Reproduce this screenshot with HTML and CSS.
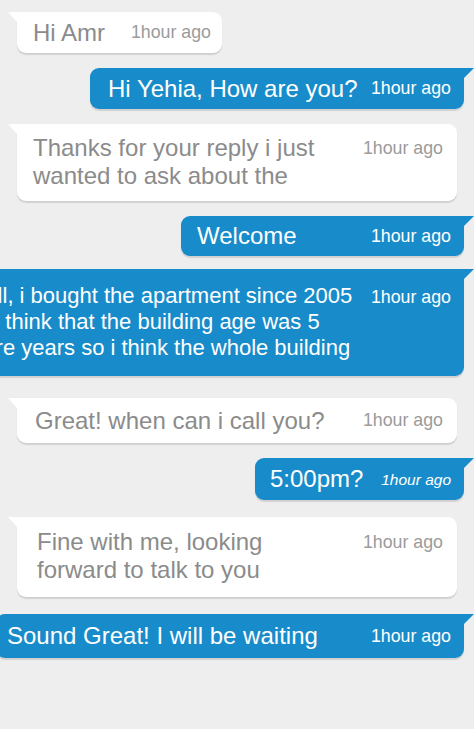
FILE: index.html
```html
<!DOCTYPE html>
<html lang="en">
<head>
<meta charset="utf-8">
<title>Chat</title>
<link rel="stylesheet" href="styles.css">
</head>
<body>
<main class="chat">
  <div class="row in">
    <div class="bubble in b-hi">
      <p class="text">Hi Amr</p>
      <span class="time">1hour ago</span>
    </div>
  </div>
  <div class="row out">
    <div class="bubble out b-yehia">
      <p class="text">Hi Yehia, How are you?</p>
      <span class="time">1hour ago</span>
    </div>
  </div>
  <div class="row in">
    <div class="bubble in full multi p-17">
      <p class="text">Thanks for your reply i just<br>wanted to ask about the</p>
      <span class="time">1hour ago</span>
    </div>
  </div>
  <div class="row out">
    <div class="bubble out b-welcome">
      <p class="text">Welcome</p>
      <span class="time">1hour ago</span>
    </div>
  </div>
  <div class="row out row-long">
    <div class="bubble out b-long">
      <p class="text">Well, i bought the apartment since 2005<br>so i think that the building age was 5<br>more years so i think the whole building</p>
      <span class="time">1hour ago</span>
    </div>
  </div>
  <div class="row in row-great">
    <div class="bubble in full b-great">
      <p class="text">Great! when can i call you?</p>
      <span class="time">1hour ago</span>
    </div>
  </div>
  <div class="row out">
    <div class="bubble out b-five">
      <p class="text">5:00pm?</p>
      <span class="time italic">1hour ago</span>
    </div>
  </div>
  <div class="row in row-fine">
    <div class="bubble in full b-fine">
      <p class="text">Fine with me, looking<br>forward to talk to you</p>
      <span class="time">1hour ago</span>
    </div>
  </div>
  <div class="row out row-sound">
    <div class="bubble out b-sound">
      <p class="text">Sound Great! I will be waiting</p>
      <span class="time">1hour ago</span>
    </div>
  </div>
</main>
</body>
</html>
```

FILE: styles.css
```css
html, body {
  margin: 0;
  padding: 0;
  background: #eeeeee;
  height: 100%;
  overflow: hidden;
}

.chat {
  display: flex;
  flex-direction: column;
  gap: 15px;
  padding-top: 12px;
  font-family: "Liberation Sans", Arial, Helvetica, sans-serif;
}

.row {
  display: flex;
}

.row.in {
  justify-content: flex-start;
  padding-left: 17px;
}

.row.out {
  justify-content: flex-end;
  padding-right: 10px;
}

.bubble {
  position: relative;
  display: flex;
  align-items: flex-start;
  box-sizing: border-box;
  padding: 6.5px 13px 6.5px 18px;
  border-radius: 9px;
  box-shadow: 0 1.5px 1px rgba(0, 0, 0, 0.12);
}

.bubble::before {
  content: "";
  position: absolute;
  top: 0;
  width: 10px;
  height: 10px;
}

.bubble.in {
  background: #ffffff;
  color: #8b8b8b;
  border-top-left-radius: 0;
}

.bubble.in::before {
  left: -9px;
  width: 9px;
  background: #ffffff;
  clip-path: polygon(0 0, 100% 0, 100% 100%);
}

.bubble.out {
  background: #188cca;
  color: #ffffff;
  border-top-right-radius: 0;
}

.bubble.out::before {
  right: -10px;
  background: #188cca;
  clip-path: polygon(0 0, 100% 0, 0 100%);
}

.text {
  flex: 1 1 auto;
  min-width: 0;
  margin: 0;
  font-size: 24px;
  line-height: 28px;
  white-space: nowrap;
}

.time {
  flex: none;
  font-size: 17.8px;
  line-height: 28px;
  margin-top: -0.5px;
}

.bubble.in .time {
  color: #9b9b9b;
}

.time.italic {
  font-style: italic;
  font-size: 15.5px;
}

.full {
  width: 440px;
  padding-right: 14px;
}

.multi {
  padding-top: 10px;
  padding-bottom: 11px;
}

.p-17 {
  padding-left: 16px;
}

.b-hi {
  width: 205px;
  padding-left: 16px;
  padding-right: 11px;
}

.b-yehia {
  width: 374px;
}

.b-welcome {
  width: 283px;
  padding-left: 16px;
  padding-top: 6px;
  padding-bottom: 6px;
}

.row-long {
  margin-top: -2px;
}

.b-long {
  flex: none;
  width: 517px;
  padding-top: 14px;
  padding-bottom: 15px;
}

.b-long .text {
  font-size: 22px;
  line-height: 26px;
}

.row-great {
  margin-top: 7px;
}

.b-great {
  padding-top: 8.5px;
  padding-bottom: 8.5px;
  padding-left: 18px;
}

.b-five {
  width: 209px;
  padding-left: 15px;
}

.b-five .time {
  margin-top: 1px;
}

.row-fine {
  margin-top: 2px;
}

.b-fine {
  padding-top: 11px;
  padding-bottom: 13px;
  padding-left: 20px;
}

.row-sound {
  margin-top: 2px;
}

.b-sound {
  flex: none;
  width: 468px;
  padding-top: 8px;
  padding-bottom: 8px;
  padding-left: 11px;
}
```
